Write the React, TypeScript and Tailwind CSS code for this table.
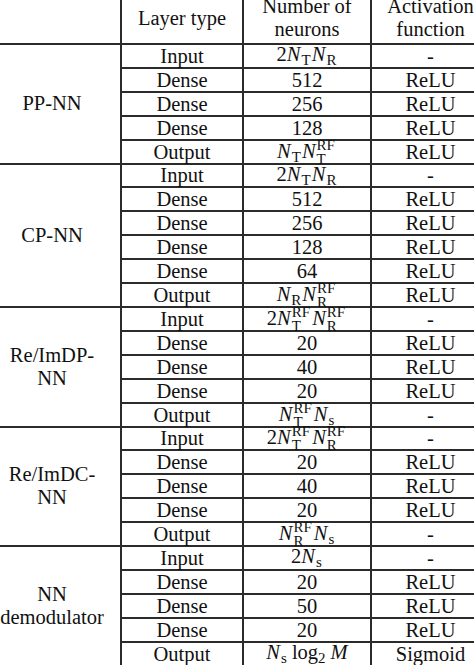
import React from "react";

type Row = { layer: string; neurons: React.ReactNode; act: string };
type Group = { name: React.ReactNode; rows: Row[] };

// italic N with optional subscript / stacked super+subscript
const N = ({ sub, sup }: { sub?: string; sup?: string }) => (
  <span>
    <i className="mr-[1px]">N</i>
    {sup ? (
      <span className="inline-flex flex-col items-start align-[8px] text-[15px] leading-[14px] mr-[2px]">
        <span>{sup}</span>
        <span>{sub}</span>
      </span>
    ) : sub ? (
      <span className="align-[-4px] text-[15px] leading-none mr-[1px]">{sub}</span>
    ) : null}
  </span>
);

const groups: Group[] = [
  {
    name: "PP-NN",
    rows: [
      { layer: "Input", neurons: <>2<N sub="T" /><N sub="R" /></>, act: "-" },
      { layer: "Dense", neurons: "512", act: "ReLU" },
      { layer: "Dense", neurons: "256", act: "ReLU" },
      { layer: "Dense", neurons: "128", act: "ReLU" },
      { layer: "Output", neurons: <><N sub="T" /><N sub="T" sup="RF" /></>, act: "ReLU" },
    ],
  },
  {
    name: "CP-NN",
    rows: [
      { layer: "Input", neurons: <>2<N sub="T" /><N sub="R" /></>, act: "-" },
      { layer: "Dense", neurons: "512", act: "ReLU" },
      { layer: "Dense", neurons: "256", act: "ReLU" },
      { layer: "Dense", neurons: "128", act: "ReLU" },
      { layer: "Dense", neurons: "64", act: "ReLU" },
      { layer: "Output", neurons: <><N sub="R" /><N sub="R" sup="RF" /></>, act: "ReLU" },
    ],
  },
  {
    name: <>Re/ImDP-<br />NN</>,
    rows: [
      { layer: "Input", neurons: <>2<N sub="T" sup="RF" /><N sub="R" sup="RF" /></>, act: "-" },
      { layer: "Dense", neurons: "20", act: "ReLU" },
      { layer: "Dense", neurons: "40", act: "ReLU" },
      { layer: "Dense", neurons: "20", act: "ReLU" },
      { layer: "Output", neurons: <><N sub="T" sup="RF" /><N sub="s" /></>, act: "-" },
    ],
  },
  {
    name: <>Re/ImDC-<br />NN</>,
    rows: [
      { layer: "Input", neurons: <>2<N sub="T" sup="RF" /><N sub="R" sup="RF" /></>, act: "-" },
      { layer: "Dense", neurons: "20", act: "ReLU" },
      { layer: "Dense", neurons: "40", act: "ReLU" },
      { layer: "Dense", neurons: "20", act: "ReLU" },
      { layer: "Output", neurons: <><N sub="R" sup="RF" /><N sub="s" /></>, act: "-" },
    ],
  },
  {
    name: <>NN<br />demodulator</>,
    rows: [
      { layer: "Input", neurons: <>2<N sub="s" /></>, act: "-" },
      { layer: "Dense", neurons: "20", act: "ReLU" },
      { layer: "Dense", neurons: "50", act: "ReLU" },
      { layer: "Dense", neurons: "20", act: "ReLU" },
      {
        layer: "Output",
        neurons: (
          <>
            <N sub="s" />
            <span className="ml-[4px]">log</span>
            <span className="align-[-4px] text-[15px] leading-none">2</span>
            <i className="ml-[5px]">M</i>
          </>
        ),
        act: "Sigmoid",
      },
    ],
  },
];

export default function App() {
  return (
    <div className="w-[474px] h-[665px] overflow-hidden bg-white text-[#111] [font-family:'Liberation_Serif',serif] text-[20.5px]">
      <div className="w-[489px] -mt-[7px]">
        {/* header */}
        <div className="flex h-[52px] border-b-2 border-[#2b2b2b] leading-[23px] text-center">
          <div className="w-[122px] border-r-2 border-[#2b2b2b]" />
          <div className="w-[122px] border-r-2 border-[#2b2b2b] flex items-center justify-center">
            Layer type
          </div>
          <div className="w-[128px] border-r-2 border-[#2b2b2b] flex items-center justify-center">
            Number of<br />neurons
          </div>
          <div className="w-[117px] flex items-center justify-center">
            Activation<br />function
          </div>
        </div>

        {groups.map((g, gi) => (
          <div key={gi} className="flex border-b-2 border-[#2b2b2b]">
            <div className="w-[122px] pr-[16px] border-r-2 border-[#2b2b2b] flex items-center justify-center text-center leading-[23px]">
              <span>{g.name}</span>
            </div>
            <div className="flex-1 flex flex-col">
              {g.rows.map((r, ri) => (
                <div
                  key={ri}
                  className="flex h-[23.92px] border-b-2 border-[#2b2b2b] last:border-b-0 last:h-[21.92px] leading-[22px] whitespace-nowrap"
                >
                  <div className="w-[122px] border-r-2 border-[#2b2b2b] flex items-center justify-center">
                    {r.layer}
                  </div>
                  <div className="w-[128px] border-r-2 border-[#2b2b2b] flex items-center justify-center">
                    <span>{r.neurons}</span>
                  </div>
                  <div className="w-[117px] flex items-center justify-center">{r.act}</div>
                </div>
              ))}
            </div>
          </div>
        ))}
      </div>
    </div>
  );
}
